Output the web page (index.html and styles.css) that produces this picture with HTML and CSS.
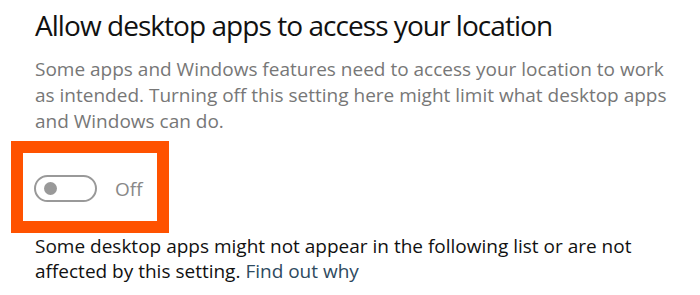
FILE: index.html
```html
<!DOCTYPE html>
<html lang="en">
<head>
<meta charset="utf-8">
<title>Location settings</title>
<link rel="stylesheet" href="styles.css">
</head>
<body>
<main class="page">
  <h1 class="title">Allow desktop apps to access your location</h1>
  <p class="desc">Some apps and Windows features need to access your location to work<br>as intended. Turning off this setting here might limit what desktop apps<br>and Windows can do.</p>
  <div class="highlight">
    <div class="toggle-row">
      <span class="toggle"><span class="knob"></span></span>
      <span class="state">Off</span>
    </div>
  </div>
  <p class="note">Some desktop apps might not appear in the following list or are not<br>affected by this setting. <a class="link" href="#">Find out why</a></p>
</main>
</body>
</html>
```
FILE: styles.css
```css
html, body {
  margin: 0;
  padding: 0;
  background: #ffffff;
}
.page {
  padding: 7px 0 0 35px;
  font-family: "Open Sans", "Noto Sans", sans-serif;
}
.title {
  margin: 0;
  font-size: 28px;
  font-weight: 400;
  letter-spacing: -0.95px;
  line-height: 36px;
  color: #111111;
}
.desc {
  margin: 13px 0 0 0;
  font-size: 19px;
  line-height: 26px;
  color: #777777;
}
.highlight {
  margin: 7px 0 0 -24px;
  width: 134px;
  height: 68px;
  border: 12px solid #ff5200;
  display: flex;
  align-items: center;
}
.toggle-row {
  display: flex;
  align-items: center;
  gap: 18px;
  padding-left: 11px;
  padding-top: 3px;
}
.toggle {
  box-sizing: border-box;
  width: 63px;
  height: 27px;
  border: 2px solid #999999;
  border-radius: 14px;
  display: flex;
  align-items: center;
  padding-left: 8px;
}
.knob {
  width: 13px;
  height: 13px;
  border-radius: 50%;
  background: #999999;
}
.state {
  font-size: 19px;
  color: #888888;
}
.note {
  margin: 1px 0 0 0;
  font-size: 19px;
  line-height: 25px;
  color: #111111;
}
.link {
  color: #2e4a60;
  text-decoration: none;
}
```
